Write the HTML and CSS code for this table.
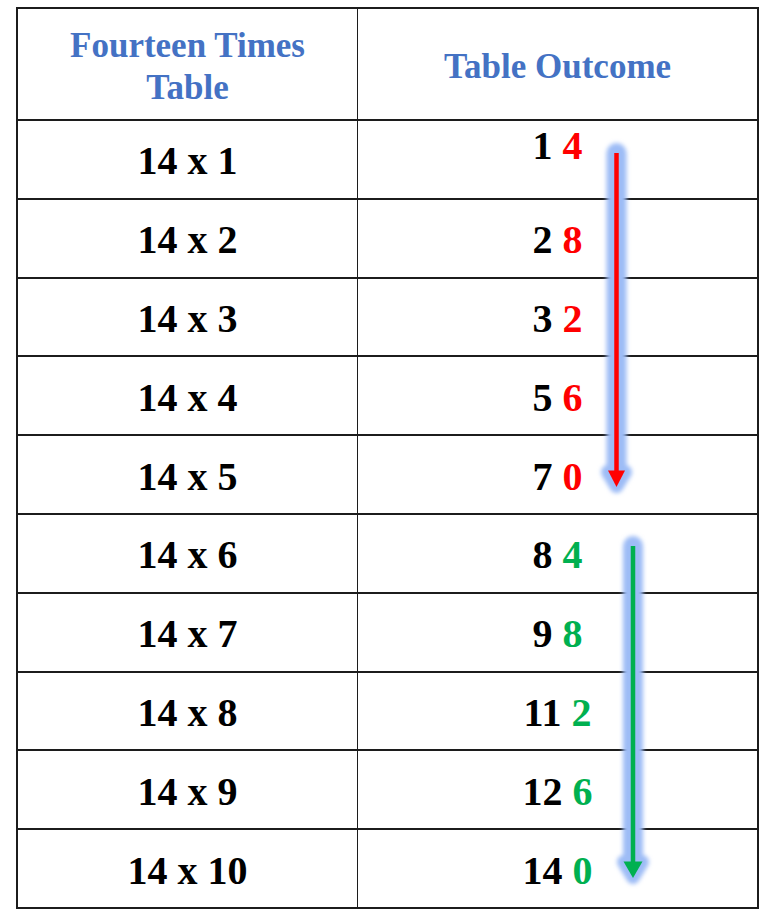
FILE: index.html
```html
<!DOCTYPE html>
<html>
<head>
<meta charset="utf-8">
<link rel="stylesheet" href="styles.css">
</head>
<body>
<div class="page">
  <div class="grid">
    <div class="cell head">Fourteen Times<br>Table</div>
    <div class="cell head">Table Outcome</div>

    <div class="cell">14 x 1</div>
    <div class="cell first">1 <span class="red">4</span></div>
    <div class="cell">14 x 2</div>
    <div class="cell">2 <span class="red">8</span></div>
    <div class="cell">14 x 3</div>
    <div class="cell">3 <span class="red">2</span></div>
    <div class="cell">14 x 4</div>
    <div class="cell">5 <span class="red">6</span></div>
    <div class="cell">14 x 5</div>
    <div class="cell">7 <span class="red">0</span></div>
    <div class="cell">14 x 6</div>
    <div class="cell">8 <span class="green">4</span></div>
    <div class="cell">14 x 7</div>
    <div class="cell">9 <span class="green">8</span></div>
    <div class="cell">14 x 8</div>
    <div class="cell">11 <span class="green">2</span></div>
    <div class="cell">14 x 9</div>
    <div class="cell">12 <span class="green">6</span></div>
    <div class="cell">14 x 10</div>
    <div class="cell">14 <span class="green">0</span></div>
  </div>
  <svg class="arrows" width="768" height="911" viewBox="0 0 768 911">
    <defs>
      <filter id="glow" x="-100%" y="-10%" width="300%" height="120%">
        <feGaussianBlur stdDeviation="2.2"/>
      </filter>
    </defs>
    <g filter="url(#glow)" fill="#9dbcf6" stroke="#9dbcf6" stroke-width="20" stroke-linecap="round" stroke-linejoin="round">
      <line x1="616.5" y1="153" x2="616.5" y2="472"/>
      <polygon points="608,472 625,472 616.5,486" stroke-width="14"/>
      <line x1="633" y1="546" x2="633" y2="862"/>
      <polygon points="624,862 642,862 633,877" stroke-width="14"/>
    </g>
    <line x1="616.5" y1="153" x2="616.5" y2="472" stroke="#ff0000" stroke-width="4.5"/>
    <polygon points="608,470.5 625,470.5 616.5,487" fill="#ff0000"/>
    <line x1="633" y1="546" x2="633" y2="863" stroke="#00b050" stroke-width="4.5"/>
    <polygon points="623.5,861.5 642.5,861.5 633,878" fill="#00b050"/>
  </svg>
</div>
</body>
</html>
```

FILE: styles.css
```css
html, body {
  margin: 0;
  padding: 0;
  background: #ffffff;
}

.page {
  position: relative;
  width: 768px;
  height: 911px;
  padding: 7px 0 0 16px;
  box-sizing: border-box;
}

.grid {
  display: grid;
  grid-template-columns: 339px 399px;
  grid-template-rows: 110px repeat(10, 76.8px);
  gap: 2px 1px;
  padding: 2px;
  width: max-content;
  background: #1c1c1c;
}

.cell {
  background: #ffffff;
  display: flex;
  align-items: center;
  justify-content: center;
  text-align: center;
  padding-top: 4px;
  box-sizing: border-box;
  font-family: "Liberation Serif", "Times New Roman", serif;
  font-weight: bold;
  font-size: 40px;
  line-height: 48px;
  color: #000000;
  white-space: pre;
}

.cell.head {
  font-size: 35px;
  line-height: 42px;
  padding-top: 6px;
  color: #4472c4;
}

.cell.first {
  padding-top: 0;
  padding-bottom: 26px;
}

.red {
  color: #ff0000;
}

.green {
  color: #00b050;
}

.arrows {
  position: absolute;
  left: 0;
  top: 0;
  pointer-events: none;
}
```
